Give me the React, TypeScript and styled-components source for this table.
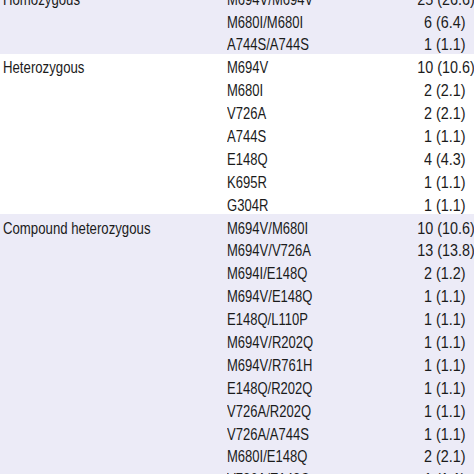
import React from "react";
import styled, { createGlobalStyle } from "styled-components";

const Global = createGlobalStyle`
  html, body {
    margin: 0;
    padding: 0;
    background: #ffffff;
    overflow: hidden;
  }
  body {
    width: 474px;
    height: 474px;
  }
`;

const Table = styled.div`
  margin-top: -14.7px;
  width: 474px;
  font-family: "Liberation Sans", Arial, sans-serif;
  font-size: 16.5px;
  color: #1b1b1b;
`;

const Group = styled.div<{ $shaded: boolean }>`
  background: ${(p) => (p.$shaded ? "#ecebf7" : "#ffffff")};
`;

const Row = styled.div`
  display: grid;
  grid-template-columns: 227px 186px 64px;
  box-sizing: border-box;
  height: 22.9px;
  padding-top: 4.3px;
  line-height: 18.6px;
  white-space: nowrap;
`;

const Label = styled.div`
  padding-left: 3px;
`;

const Variant = styled.div``;

const Count = styled.div`
  text-align: center;
`;

/* condensed face: the page's typeface is a narrow grotesque */
const Narrow = styled.span<{ $origin: "left" | "center"; $scale: number }>`
  display: inline-block;
  transform: scaleX(${(p) => p.$scale});
  transform-origin: ${(p) => p.$origin} center;
`;

type Entry = [string, string];
type GroupData = { label: string; shaded: boolean; rows: Entry[] };

const groups: GroupData[] = [
  {
    label: "Homozygous",
    shaded: true,
    rows: [
      ["M694V/M694V", "25 (26.6)"],
      ["M680I/M680I", "6 (6.4)"],
      ["A744S/A744S", "1 (1.1)"],
    ],
  },
  {
    label: "Heterozygous",
    shaded: false,
    rows: [
      ["M694V", "10 (10.6)"],
      ["M680I", "2 (2.1)"],
      ["V726A", "2 (2.1)"],
      ["A744S", "1 (1.1)"],
      ["E148Q", "4 (4.3)"],
      ["K695R", "1 (1.1)"],
      ["G304R", "1 (1.1)"],
    ],
  },
  {
    label: "Compound heterozygous",
    shaded: true,
    rows: [
      ["M694V/M680I", "10 (10.6)"],
      ["M694V/V726A", "13 (13.8)"],
      ["M694I/E148Q", "2 (1.2)"],
      ["M694V/E148Q", "1 (1.1)"],
      ["E148Q/L110P", "1 (1.1)"],
      ["M694V/R202Q", "1 (1.1)"],
      ["M694V/R761H", "1 (1.1)"],
      ["E148Q/R202Q", "1 (1.1)"],
      ["V726A/R202Q", "1 (1.1)"],
      ["V726A/A744S", "1 (1.1)"],
      ["M680I/E148Q", "2 (2.1)"],
      ["V726A/E148Q", "1 (1.1)"],
    ],
  },
];

export default function App() {
  return (
    <>
      <Global />
      <Table>
        {groups.map((g) => (
          <Group key={g.label} $shaded={g.shaded}>
            {g.rows.map(([variant, count], i) => (
              <Row key={variant}>
                <Label>
                  {i === 0 ? (
                    <Narrow $origin="left" $scale={0.8}>
                      {g.label}
                    </Narrow>
                  ) : null}
                </Label>
                <Variant>
                  <Narrow $origin="left" $scale={0.79}>
                    {variant}
                  </Narrow>
                </Variant>
                <Count>
                  <Narrow $origin="center" $scale={0.87}>
                    {count}
                  </Narrow>
                </Count>
              </Row>
            ))}
          </Group>
        ))}
      </Table>
    </>
  );
}
